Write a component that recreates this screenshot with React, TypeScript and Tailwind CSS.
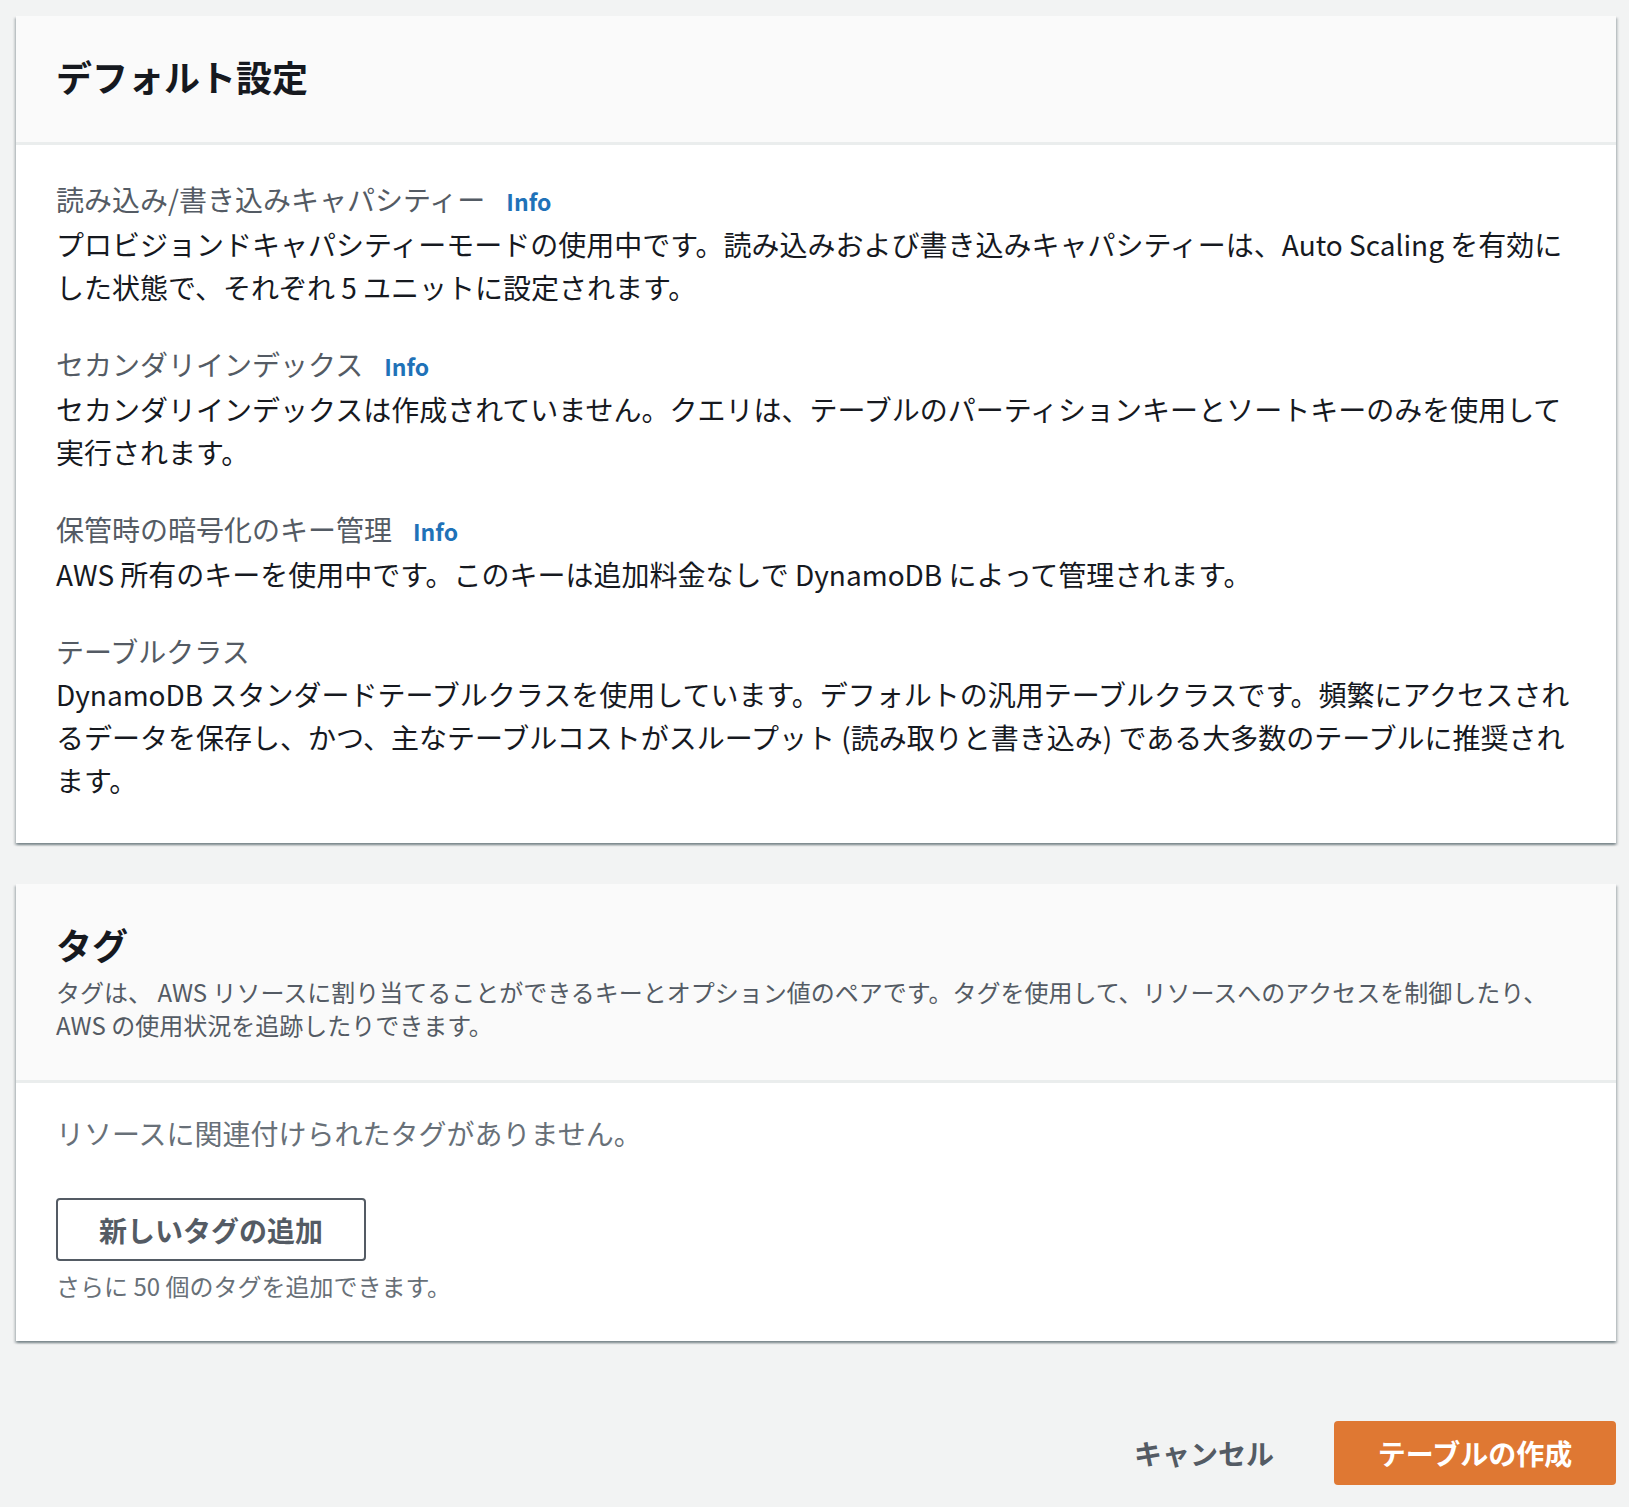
import React from "react";

const font = { fontFamily: '"Noto Sans CJK JP", "Noto Sans", sans-serif' };

const cardShadow =
  "shadow-[0_2px_2px_0_rgba(0,28,36,0.3),2px_2px_2px_0_rgba(0,28,36,0.15),-2px_2px_2px_0_rgba(0,28,36,0.15)]";

function Label({ children, info }: { children: React.ReactNode; info?: boolean }) {
  return (
    <div className="flex items-baseline text-[28px] leading-[43px] text-[#545b64]">
      <span>{children}</span>
      {info && (
        <span className="ml-[21px] text-[23px] font-bold text-[#1f72b8]">Info</span>
      )}
    </div>
  );
}

function Body({ children }: { children: React.ReactNode }) {
  return <div className="text-[28px] leading-[43px] text-[#16191f]">{children}</div>;
}

export default function App() {
  return (
    <div style={font} className="min-h-[1507px] w-full bg-[#f2f3f3] pt-[16px] pl-[16px] pr-[13px]">
      {/* Default settings card */}
      <div className={`bg-white ${cardShadow}`}>
        <div className="border-b-[3px] border-[#eaeded] bg-[#fafafa] px-[40px] pt-[39px] pb-[44px]">
          <h2 className="text-[36px] font-bold leading-[43px] text-[#16191f]">デフォルト設定</h2>
        </div>
        <div className="flex flex-col gap-[34px] px-[40px] pt-[33px] pb-[41px]">
          <div>
            <Label info>読み込み/書き込みキャパシティー</Label>
            <Body>
              プロビジョンドキャパシティーモードの使用中です。読み込みおよび書き込みキャパシティーは、Auto Scaling を有効に
              <br />
              した状態で、それぞれ 5 ユニットに設定されます。
            </Body>
          </div>
          <div>
            <Label info>セカンダリインデックス</Label>
            <Body>
              セカンダリインデックスは作成されていません。クエリは、テーブルのパーティションキーとソートキーのみを使用して
              <br />
              実行されます。
            </Body>
          </div>
          <div>
            <Label info>保管時の暗号化のキー管理</Label>
            <Body>AWS 所有のキーを使用中です。このキーは追加料金なしで DynamoDB によって管理されます。</Body>
          </div>
          <div>
            <Label>テーブルクラス</Label>
            <Body>
              DynamoDB スタンダードテーブルクラスを使用しています。デフォルトの汎用テーブルクラスです。頻繁にアクセスされ
              <br />
              るデータを保存し、かつ、主なテーブルコストがスループット (読み取りと書き込み) である大多数のテーブルに推奨され
              <br />
              ます。
            </Body>
          </div>
        </div>
      </div>

      {/* Tags card */}
      <div className={`mt-[41px] bg-white ${cardShadow}`}>
        <div className="border-b-[3px] border-[#eaeded] bg-[#fafafa] px-[40px] pt-[39px] pb-[39px]">
          <h2 className="text-[36px] font-bold leading-[43px] text-[#16191f]">タグ</h2>
          <p className="mt-[9px] text-[24px] leading-[33px] text-[#545b64]">
            タグは、 AWS リソースに割り当てることができるキーとオプション値のペアです。タグを使用して、リソースへのアクセスを制御したり、
            <br />
            AWS の使用状況を追跡したりできます。
          </p>
        </div>
        <div className="px-[40px] pt-[29px] pb-[39px]">
          <div className="text-[28px] leading-[43px] text-[#687078]">リソースに関連付けられたタグがありません。</div>
          <button
            style={font}
            className="mt-[43px] flex h-[63px] w-[310px] items-center justify-center rounded-[4px] border-2 border-[#545b64] bg-white text-[28px] font-bold text-[#545b64]"
          >
            新しいタグの追加
          </button>
          <div className="mt-[8px] text-[24px] leading-[33px] text-[#687078]">さらに 50 個のタグを追加できます。</div>
        </div>
      </div>

      {/* Footer actions */}
      <div className="mt-[80px] flex items-center justify-end gap-[19px]">
        <button
          style={font}
          className="flex h-[64px] items-center px-[41px] text-[28px] font-bold text-[#545b64]"
        >
          キャンセル
        </button>
        <button
          style={font}
          className="flex h-[64px] w-[282px] items-center justify-center rounded-[4px] bg-[#df7833] text-[28px] font-bold text-white"
        >
          テーブルの作成
        </button>
      </div>
    </div>
  );
}
